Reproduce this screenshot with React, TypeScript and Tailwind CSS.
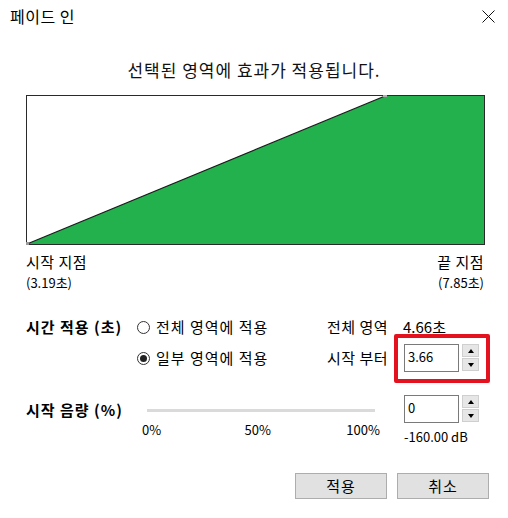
// Small up/down spinner used next to the numeric inputs
function Spinner() {
  return (
    <div className="flex flex-col gap-[1px] ml-[3px]">
      <div className="w-[17px] h-[13px] bg-[#e6e6e6] border border-[#cfcfcf] flex items-center justify-center">
        <div className="w-0 h-0 border-l-[3px] border-r-[3px] border-b-[4px] border-l-transparent border-r-transparent border-b-black" />
      </div>
      <div className="w-[17px] h-[13px] bg-[#e6e6e6] border border-[#cfcfcf] flex items-center justify-center">
        <div className="w-0 h-0 border-l-[3px] border-r-[3px] border-t-[4px] border-l-transparent border-r-transparent border-t-black" />
      </div>
    </div>
  );
}

function NumberBox({ value }: { value: string }) {
  return (
    <div className="flex items-start">
      <div className="w-[55px] h-[28px] border border-[#7a7a7a] bg-white px-[3px] pt-[3px] text-[13px] leading-[18px] text-black">
        {value}
      </div>
      <Spinner />
    </div>
  );
}

function Radio({ checked, label }: { checked?: boolean; label: string }) {
  return (
    <div className="flex items-center gap-[6px]">
      <div className="w-[13px] h-[13px] rounded-full border border-[#333] bg-white flex items-center justify-center">
        {checked && <div className="w-[7px] h-[7px] rounded-full bg-[#222]" />}
      </div>
      <span className="text-[15px] leading-[20px] tracking-[1px] text-black">{label}</span>
    </div>
  );
}

export default function App() {
  return (
    <div className="w-[508px] h-[518px] bg-white flex flex-col [font-family:'Noto_Sans_CJK_KR','Noto_Sans',sans-serif] text-black">
      {/* title bar */}
      <div className="flex items-center justify-between h-[32px] pl-[10px] pr-[13px]">
        <span className="text-[16px] leading-[20px] tracking-[0.5px]">페이드 인</span>
        <svg width="13" height="13" viewBox="0 0 13 13">
          <path d="M0.5 0.5 L12.5 12.5 M12.5 0.5 L0.5 12.5" stroke="#111" strokeWidth="1" />
        </svg>
      </div>

      <p className="mt-[27px] text-center text-[17px] leading-[22px] tracking-[1px] text-[#111]">
        선택된 영역에 효과가 적용됩니다.
      </p>

      {/* fade curve */}
      <div className="mt-[14px] ml-[26px] w-[459px] h-[150px]">
        <svg width="459" height="150" viewBox="0 0 459 150">
          <rect x="0.5" y="0.5" width="458" height="149" fill="#ffffff" stroke="#2a2a2a" strokeWidth="1" />
          <polygon points="1,149 359,1 458,1 458,149" fill="#22b14c" />
          <line x1="1" y1="149" x2="359" y2="1" stroke="#1b1b1b" strokeWidth="1.2" />
          <line x1="359" y1="0.5" x2="458.5" y2="0.5" stroke="#2a2a2a" strokeWidth="1" />
          <line x1="458.5" y1="0" x2="458.5" y2="150" stroke="#2a2a2a" strokeWidth="1" />
          <line x1="0" y1="149.5" x2="459" y2="149.5" stroke="#2a2a2a" strokeWidth="1" />
          <rect x="-1" y="147" width="4" height="4" fill="#9a9a9a" />
          <rect x="357" y="-1" width="4" height="3" fill="#b0b0b0" />
        </svg>
      </div>

      {/* start / end points */}
      <div className="mt-[7px] mr-[24px] ml-[26px] flex justify-between">
        <div className="flex flex-col">
          <span className="text-[15px] leading-[20px] tracking-[0.5px]">시작 지점</span>
          <span className="text-[13px] leading-[20px] mt-[1px]">(3.19초)</span>
        </div>
        <div className="flex flex-col items-end">
          <span className="text-[15px] leading-[20px] tracking-[0.5px]">끝 지점</span>
          <span className="text-[13px] leading-[20px] mt-[1px]">(7.85초)</span>
        </div>
      </div>

      {/* time apply */}
      <div className="mt-[24px] ml-[26px] flex items-center h-[20px]">
        <span className="w-[111px] text-[15px] leading-[20px] tracking-[1px] font-bold">시간 적용 (초)</span>
        <div className="w-[190px]">
          <Radio label="전체 영역에 적용" />
        </div>
        <span className="w-[76px] text-[15px] leading-[20px] tracking-[0.5px]">전체 영역</span>
        <span className="text-[15px] leading-[20px]">4.66초</span>
      </div>

      <div className="mt-[7px] ml-[137px] flex items-center h-[28px]">
        <div className="w-[190px]">
          <Radio checked label="일부 영역에 적용" />
        </div>
        <span className="w-[77px] text-[15px] leading-[20px] tracking-[0.5px]">시작 부터</span>
        <div className="relative">
          <NumberBox value="3.66" />
          <div className="absolute -left-[10px] -top-[10px] -bottom-[11px] -right-[11px] border-[4px] border-[#e3121e] rounded-[2px]" />
        </div>
      </div>

      {/* start volume */}
      <div className="mt-[23px] ml-[26px] flex items-start">
        <span className="w-[111px] mt-[5px] text-[15px] leading-[20px] tracking-[1px] font-bold">시작 음량 (%)</span>
        <div className="ml-[5px] w-[238px] flex flex-col">
          <div className="mt-[14px] mx-[5px] h-[3px] bg-[#dadada]" />
          <div className="mt-[9px] flex justify-between text-[13px] leading-[18px]">
            <span>0%</span>
            <span className="ml-[8px]">50%</span>
            <span>100%</span>
          </div>
        </div>
        <div className="ml-[24px] flex flex-col">
          <NumberBox value="0" />
          <span className="mt-[5px] text-[13px] leading-[18px]">-160.00 dB</span>
        </div>
      </div>

      {/* buttons */}
      <div className="mt-[27px] mr-[19px] flex justify-end gap-[10px]">
        <button className="w-[92px] h-[26px] bg-[#e1e1e1] border border-[#adadad] text-[15px] leading-[20px] tracking-[1px]">
          적용
        </button>
        <button className="w-[92px] h-[26px] bg-[#e1e1e1] border border-[#adadad] text-[15px] leading-[20px] tracking-[1px]">
          취소
        </button>
      </div>
    </div>
  );
}
